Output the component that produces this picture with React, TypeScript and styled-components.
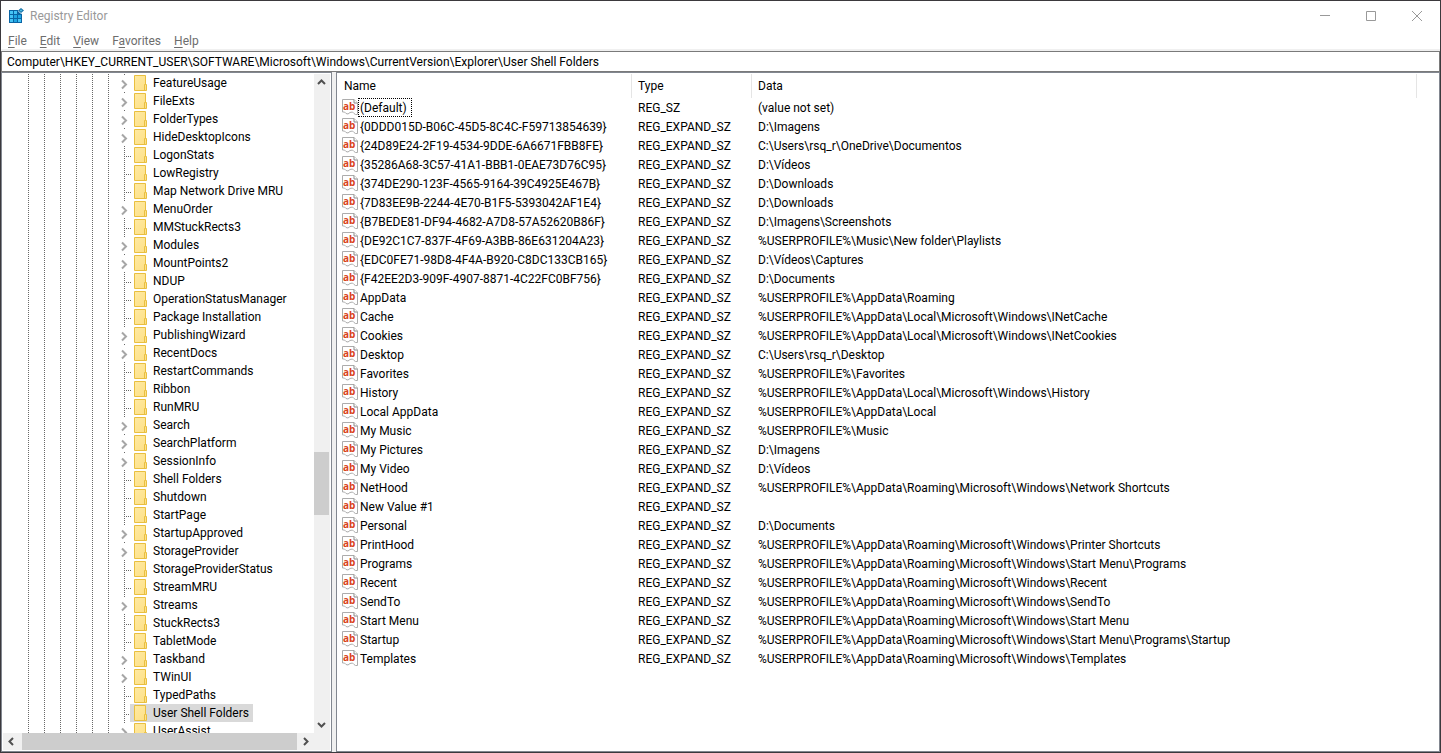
import React, { useState } from "react";
import styled, { createGlobalStyle } from "styled-components";

const GlobalStyle = createGlobalStyle`
  * { box-sizing: border-box; }
  html, body { margin: 0; background: #ffffff; }
  body, button, input, table {
    font-family: Roboto, "Open Sans", sans-serif;
    font-size: 12px;
    line-height: 18px;
    color: #000000;
  }
  button { border: 0; padding: 0; background: none; }
`;

const Window = styled.div`
  display: flex;
  flex-direction: column;
  height: 100vh;
  border: 1px solid #3b393d;
  background: #ffffff;
  overflow: hidden;
`;

const TitleBar = styled.header`
  display: flex;
  align-items: center;
  height: 30px;
  padding-left: 7px;
  flex: none;
`;

const Title = styled.h1`
  margin: 0 auto 0 6px;
  font-size: 12px;
  font-weight: 400;
  color: #999999;
`;

const CaptionButton = styled.button`
  display: grid;
  place-items: center;
  width: 46px;
  height: 30px;
  color: #999999;
`;

const MenuBar = styled.nav`
  display: flex;
  gap: 13px;
  height: 20px;
  padding: 0 7px;
  border-bottom: 2px solid #f0f0f0;
  flex: none;
`;

const MenuButton = styled.button`
  height: 20px;
  line-height: 20px;
  color: #6d6d6d;
  u { text-underline-offset: 2px; }
`;

const Address = styled.input`
  display: block;
  width: 100%;
  height: 21px;
  padding: 0 5px;
  border: 1px solid #7a7a7a;
  border-radius: 0;
  outline: 0;
  background: #ffffff;
  flex: none;
`;

const Panes = styled.main`
  display: flex;
  gap: 4px;
  flex: 1;
  min-height: 0;
  background: #f0f0f0;
`;

const TreePane = styled.section`
  display: flex;
  flex-direction: column;
  width: 331px;
  padding: 1px;
  border: 1px solid #828790;
  background: #ffffff;
  flex: none;
`;

const TreeBody = styled.div`
  display: flex;
  flex: 1;
  min-height: 0;
`;

const Tree = styled.ul`
  flex: 1;
  margin: 0;
  padding: 0;
  list-style: none;
  overflow: hidden;
`;

const TreeRow = styled.li`
  display: flex;
  height: 18px;
`;

const dots = "repeating-linear-gradient(to bottom, #686868 0 1px, transparent 1px 2px)";

const Guide = styled.span`
  width: 16px;
  height: 18px;
  background: ${dots} 0 0 / 1px 100% no-repeat;
  flex: none;
`;

const Indent = styled.span`
  display: flex;
  padding-left: 25px;
  flex: none;
`;

const Joint = styled.span<{ $leaf: boolean }>`
  width: 7px;
  height: 18px;
  flex: none;
  background: ${(p) =>
    p.$leaf
      ? `${dots} 0 0 / 1px 100% no-repeat, repeating-linear-gradient(to right, #686868 0 1px, transparent 1px 2px) 0 10px / 100% 1px no-repeat`
      : `${dots} 0 0 / 1px 1px no-repeat`};
`;

const Expander = styled.button`
  display: block;
  width: 10px;
  height: 18px;
  margin-left: -4px;
`;

const TreeLabel = styled.span<{ $selected: boolean }>`
  display: flex;
  align-items: center;
  gap: 6px;
  height: 18px;
  margin-left: -1px;
  padding: 0 4px;
  background: ${(p) => (p.$selected ? "#d9d9d9" : "transparent")};
  white-space: nowrap;
  cursor: default;
`;

const VerticalScroll = styled.div`
  display: flex;
  flex-direction: column;
  width: 16px;
  background: #f0f0f0;
  flex: none;
`;

const HorizontalScroll = styled.div`
  display: flex;
  height: 17px;
  padding-right: 17px;
  background: #f0f0f0;
  flex: none;
`;

const ScrollButton = styled.button`
  display: grid;
  place-items: center;
  width: 15px;
  height: 17px;
  flex: none;
`;

const Track = styled.div<{ $vertical?: boolean }>`
  display: flex;
  flex-direction: ${(p) => (p.$vertical ? "column" : "row")};
  flex: 1;
`;

const TrackSpace = styled.div<{ $share: number }>`
  flex: ${(p) => p.$share} 1 0;
`;

const Thumb = styled.div<{ $share: number }>`
  flex: ${(p) => p.$share} 1 0;
  margin: 0 1px 0 0;
  background: #cdcdcd;
`;

const ListPane = styled.section`
  flex: 1;
  min-width: 0;
  padding-top: 1px;
  border: 1px solid #828790;
  background: #ffffff;
  overflow: hidden;
`;

const Values = styled.table`
  width: 100%;
  table-layout: fixed;
  border-collapse: separate;
  border-spacing: 0;
`;

const HeadCell = styled.th`
  height: 24px;
  padding: 0 0 0 6px;
  border-right: 1px solid #e5e5e5;
  font-weight: 400;
  text-align: left;
  &:first-child { padding-left: 7px; }
  &:last-child { border-right: 0; }
`;

const Cell = styled.td`
  height: 19px;
  padding: 0 0 0 6px;
  white-space: nowrap;
  &:first-child { padding-left: 5px; }
`;

const NameBox = styled.div`
  display: flex;
  height: 19px;
  svg { margin-top: 1px; }
`;

const ValueName = styled.span<{ $focused: boolean }>`
  height: 19px;
  padding: 0 ${(p) => (p.$focused ? 4 : 1)}px 0 1px;
  border: 1px dotted ${(p) => (p.$focused ? "#000000" : "transparent")};
`;

const Art = styled.svg`
  display: block;
  flex: none;
`;

const AppIcon = () => (
  <Art width="16" height="16" viewBox="0 0 16 16" aria-hidden="true">
    <path d="M1 2h9l4 4v9H1z" fill="#0a64a4" />
    <path d="M2 3h3v3H2zM6 3h3v3H6zM2 7h3v3H2zM2 11h3v3H2zM10 11h3v3h-3z" fill="#45c4f5" />
    <path d="M6 7h3v3H6zM10 7h3v3h-3zM6 11h3v3H6z" fill="#1ea5e2" />
    <path d="M10 0h6v5.500h-3.500L10 3z" fill="#ffffff" />
    <path d="M13 0l3 2.500-3 2.500-3-2.500z" fill="#136fa5" />
    <path d="M13 1.200l1.500 1.300L13 3.800l-1.500-1.300z" fill="#4fb9e0" />
  </Art>
);

const FolderIcon = () => (
  <Art width="13" height="16" viewBox="0 0 13 16" aria-hidden="true">
    <defs>
      <linearGradient id="folder" x1="0" y1="0" x2="1" y2="1">
        <stop offset="0" stopColor="#ffeaa2" />
        <stop offset="1" stopColor="#fddf84" />
      </linearGradient>
    </defs>
    <path d="M.5.5h11v9h1v6H.5z" fill="url(#folder)" stroke="#e9bf3f" />
    <path d="M10.500 15.500v-6h1" fill="none" stroke="#e9bf3f" />
  </Art>
);

const StringIcon = () => (
  <Art width="16" height="16" viewBox="0 0 16 16" aria-hidden="true">
    <path d="M.5.5H12l3.500 3.500v11.500h-2L12 14.500 10.500 13 8 13.500 6 15l-2-.5-1.500-1.500h-2z" fill="#ffffff" stroke="#acacac" />
    <path d="M12 .5v3.500h3.500" fill="#ffffff" stroke="#8a8a8a" />
    <text x="1" y="11" fontFamily="Open Sans, sans-serif" fontSize="10" fontWeight="700" fill="#d9431c">ab</text>
  </Art>
);

const arrows = {
  up: "M1 6l3.500-3.500L8 6",
  down: "M1 3l3.500 3.500L8 3",
  left: "M7 1L3.500 4.500 7 8",
  right: "M3 1l3.500 3.500L3 8",
};

const Arrow = ({ to }: { to: keyof typeof arrows }) => (
  <Art width="9" height="9" viewBox="0 0 9 9" aria-hidden="true">
    <path d={arrows[to]} fill="none" stroke="#505050" strokeWidth="2" />
  </Art>
);

// A leading "+" marks a key that holds subkeys.
const keys = [
  "+FeatureUsage", "+FileExts", "+FolderTypes", "+HideDesktopIcons", "LogonStats", "LowRegistry",
  "Map Network Drive MRU", "+MenuOrder", "MMStuckRects3", "+Modules", "+MountPoints2", "NDUP",
  "OperationStatusManager", "Package Installation", "+PublishingWizard", "+RecentDocs",
  "RestartCommands", "Ribbon", "RunMRU", "+Search", "+SearchPlatform", "+SessionInfo",
  "Shell Folders", "Shutdown", "StartPage", "+StartupApproved", "+StorageProvider",
  "StorageProviderStatus", "StreamMRU", "+Streams", "StuckRects3", "TabletMode", "+Taskband",
  "+TWinUI", "TypedPaths", "User Shell Folders", "+UserAssist",
];

const profile = "%USERPROFILE%";
const roaming = profile + "\\AppData\\Roaming";
const local = profile + "\\AppData\\Local";
const roamingWin = roaming + "\\Microsoft\\Windows";
const localWin = local + "\\Microsoft\\Windows";

const values: [string, string][] = [
  ["(Default)", "(value not set)"],
  ["{0DDD015D-B06C-45D5-8C4C-F59713854639}", "D:\\Imagens"],
  ["{24D89E24-2F19-4534-9DDE-6A6671FBB8FE}", "C:\\Users\\rsq_r\\OneDrive\\Documentos"],
  ["{35286A68-3C57-41A1-BBB1-0EAE73D76C95}", "D:\\Vídeos"],
  ["{374DE290-123F-4565-9164-39C4925E467B}", "D:\\Downloads"],
  ["{7D83EE9B-2244-4E70-B1F5-5393042AF1E4}", "D:\\Downloads"],
  ["{B7BEDE81-DF94-4682-A7D8-57A52620B86F}", "D:\\Imagens\\Screenshots"],
  ["{DE92C1C7-837F-4F69-A3BB-86E631204A23}", profile + "\\Music\\New folder\\Playlists"],
  ["{EDC0FE71-98D8-4F4A-B920-C8DC133CB165}", "D:\\Vídeos\\Captures"],
  ["{F42EE2D3-909F-4907-8871-4C22FC0BF756}", "D:\\Documents"],
  ["AppData", roaming],
  ["Cache", localWin + "\\INetCache"],
  ["Cookies", localWin + "\\INetCookies"],
  ["Desktop", "C:\\Users\\rsq_r\\Desktop"],
  ["Favorites", profile + "\\Favorites"],
  ["History", localWin + "\\History"],
  ["Local AppData", local],
  ["My Music", profile + "\\Music"],
  ["My Pictures", "D:\\Imagens"],
  ["My Video", "D:\\Vídeos"],
  ["NetHood", roamingWin + "\\Network Shortcuts"],
  ["New Value #1", ""],
  ["Personal", "D:\\Documents"],
  ["PrintHood", roamingWin + "\\Printer Shortcuts"],
  ["Programs", roamingWin + "\\Start Menu\\Programs"],
  ["Recent", roamingWin + "\\Recent"],
  ["SendTo", roamingWin + "\\SendTo"],
  ["Start Menu", roamingWin + "\\Start Menu"],
  ["Startup", roamingWin + "\\Start Menu\\Programs\\Startup"],
  ["Templates", roamingWin + "\\Templates"],
];

export default function App() {
  const [selected, setSelected] = useState("User Shell Folders");
  const [path, setPath] = useState(
    "Computer\\HKEY_CURRENT_USER\\SOFTWARE\\Microsoft\\Windows\\CurrentVersion\\Explorer\\User Shell Folders"
  );

  return (
    <>
      <GlobalStyle />
      <Window>
        <TitleBar>
          <AppIcon />
          <Title>Registry Editor</Title>
          <CaptionButton aria-label="Minimize">
            <Art width="10" height="10"><path d="M0 4.500h10" stroke="currentColor" /></Art>
          </CaptionButton>
          <CaptionButton aria-label="Maximize">
            <Art width="10" height="10"><path d="M.5.5h9v9h-9z" fill="none" stroke="currentColor" /></Art>
          </CaptionButton>
          <CaptionButton aria-label="Close">
            <Art width="10" height="10"><path d="M0 0l10 10M10 0L0 10" stroke="currentColor" /></Art>
          </CaptionButton>
        </TitleBar>
        <MenuBar>
          <MenuButton><u>F</u>ile</MenuButton>
          <MenuButton><u>E</u>dit</MenuButton>
          <MenuButton><u>V</u>iew</MenuButton>
          <MenuButton>F<u>a</u>vorites</MenuButton>
          <MenuButton><u>H</u>elp</MenuButton>
        </MenuBar>
        <Address aria-label="Key path" value={path} onChange={(e) => setPath(e.target.value)} spellCheck={false} />
        <Panes>
          <TreePane>
            <TreeBody>
              <Tree role="tree" aria-label="Registry keys">
                {keys.map((key) => {
                  const leaf = key[0] !== "+";
                  const name = leaf ? key : key.slice(1);
                  return (
                    <TreeRow key={key} role="treeitem" aria-selected={name === selected} onClick={() => setSelected(name)}>
                      <Indent>{[0, 1, 2, 3, 4, 5].map((n) => <Guide key={n} />)}</Indent>
                      <Joint $leaf={leaf}>
                        {!leaf && (
                          <Expander aria-label={"Expand " + name}>
                            <Art width="10" height="18" viewBox="0 0 10 18">
                              <path d="M2 6.500l4 4-4 4" fill="none" stroke="#a6a6a6" strokeWidth="2" />
                            </Art>
                          </Expander>
                        )}
                      </Joint>
                      <TreeLabel $selected={name === selected}>
                        <FolderIcon />
                        {name}
                      </TreeLabel>
                    </TreeRow>
                  );
                })}
              </Tree>
              <VerticalScroll>
                <ScrollButton aria-label="Scroll up"><Arrow to="up" /></ScrollButton>
                <Track $vertical>
                  <TrackSpace $share={362} />
                  <Thumb $share={63} />
                  <TrackSpace $share={201} />
                </Track>
                <ScrollButton aria-label="Scroll down"><Arrow to="down" /></ScrollButton>
              </VerticalScroll>
            </TreeBody>
            <HorizontalScroll>
              <ScrollButton aria-label="Scroll left"><Arrow to="left" /></ScrollButton>
              <Track>
                <TrackSpace $share={4} />
                <Thumb $share={275} />
              </Track>
              <ScrollButton aria-label="Scroll right"><Arrow to="right" /></ScrollButton>
            </HorizontalScroll>
          </TreePane>
          <ListPane>
            <Values>
              <colgroup>
                <col width="295" />
                <col width="120" />
                <col />
                <col width="22" />
              </colgroup>
              <thead>
                <tr>
                  <HeadCell>Name</HeadCell>
                  <HeadCell>Type</HeadCell>
                  <HeadCell>Data</HeadCell>
                  <HeadCell aria-hidden="true" />
                </tr>
              </thead>
              <tbody>
                {values.map(([name, data], i) => (
                  <tr key={name}>
                    <Cell>
                      <NameBox>
                        <StringIcon />
                        <ValueName $focused={i === 0}>{name}</ValueName>
                      </NameBox>
                    </Cell>
                    <Cell>{i === 0 ? "REG_SZ" : "REG_EXPAND_SZ"}</Cell>
                    <Cell colSpan={2}>{data}</Cell>
                  </tr>
                ))}
              </tbody>
            </Values>
          </ListPane>
        </Panes>
      </Window>
    </>
  );
}
